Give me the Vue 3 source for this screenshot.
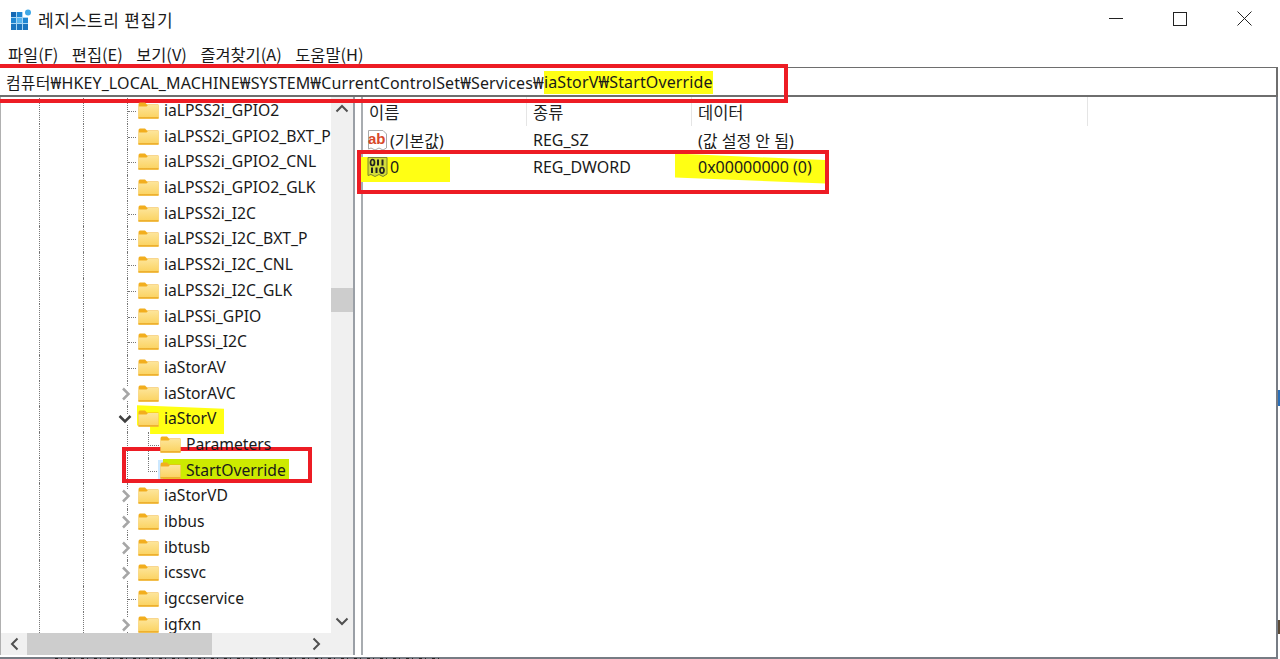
<script setup>
const rows = [
  { name: 'iaLPSS2i_GPIO2', line: 1 },
  { name: 'iaLPSS2i_GPIO2_BXT_P', line: 1 },
  { name: 'iaLPSS2i_GPIO2_CNL', line: 1 },
  { name: 'iaLPSS2i_GPIO2_GLK', line: 1 },
  { name: 'iaLPSS2i_I2C', line: 1 },
  { name: 'iaLPSS2i_I2C_BXT_P', line: 1 },
  { name: 'iaLPSS2i_I2C_CNL', line: 1 },
  { name: 'iaLPSS2i_I2C_GLK', line: 1 },
  { name: 'iaLPSSi_GPIO', line: 1 },
  { name: 'iaLPSSi_I2C', line: 1 },
  { name: 'iaStorAV', line: 1 },
  { name: 'iaStorAVC', exp: 'closed' },
  { name: 'iaStorV', exp: 'open', mark: true },
  { name: 'Parameters', child: true },
  { name: 'StartOverride', child: true, last: true, selected: true, mark: true },
  { name: 'iaStorVD', exp: 'closed' },
  { name: 'ibbus', exp: 'closed' },
  { name: 'ibtusb', exp: 'closed' },
  { name: 'icssvc', exp: 'closed' },
  { name: 'igccservice', line: 1 },
  { name: 'igfxn', exp: 'closed' }
]
const menus = ['파일(F)', '편집(E)', '보기(V)', '즐겨찾기(A)', '도움말(H)']
</script>

<template>
  <div class="window">
    <header class="titlebar">
      <svg class="appicon" width="21" height="21" viewBox="0 0 21 21">
        <rect x="0" y="3" width="17" height="18" fill="#1f86d2" />
        <rect x="6" y="9" width="5" height="5" fill="#58b4ee" />
        <rect x="0" y="3" width="5" height="5" fill="#1468b4" />
        <rect x="0" y="15" width="17" height="6" fill="#1a74be" />
        <path d="M0 8.5H17M0 14.5H17M5.5 3V21M11.5 3V21" stroke="#a8d6f4" stroke-width="1" />
        <rect x="12" y="0" width="9" height="8" fill="#fff" />
        <circle cx="17" cy="3.5" r="3" fill="#3fa8e6" />
      </svg>
      <span class="title">레지스트리 편집기</span>
      <div class="controls">
        <svg width="14" height="14" viewBox="0 0 14 14"><path d="M0 6.5H14" stroke="#222" /></svg>
        <svg width="14" height="14" viewBox="0 0 14 14"><rect x=".5" y=".5" width="13" height="13" fill="none" stroke="#222" /></svg>
        <svg width="15" height="15" viewBox="0 0 15 15"><path d="M.5.5L14.5 14.5M14.5.5L.5 14.5" stroke="#222" /></svg>
      </div>
    </header>

    <nav class="menubar">
      <span v-for="m in menus" :key="m">{{ m }}</span>
    </nav>

    <div class="address">
      <span>컴퓨터₩HKEY_LOCAL_MACHINE₩SYSTEM₩CurrentControlSet₩Services₩</span><span class="hl">iaStorV₩StartOverride</span>
    </div>

    <main class="body">
      <section class="treepane">
        <div class="treearea">
          <ul class="tree">
            <li v-for="r in rows" :key="r.name" class="row" :class="{ child: r.child, last: r.last, selected: r.selected, mark: r.mark }">
              <i class="guide g1"></i>
              <i class="guide g2"></i>
              <i class="guide g3"></i>
              <i v-if="r.line" class="stub"></i>
              <i v-if="r.child" class="elbow"></i>
              <i v-if="r.child" class="cguide"></i>
              <svg v-if="r.exp === 'closed'" class="exp" width="10" height="14" viewBox="0 0 10 14"><path d="M2 1.5L7.5 7L2 12.5" fill="none" stroke="#a6a6a6" stroke-width="2.5" /></svg>
              <svg v-if="r.exp === 'open'" class="exp open" width="14" height="10" viewBox="0 0 14 10"><path d="M1.5 2L7 7.5L12.5 2" fill="none" stroke="#404040" stroke-width="2.5" /></svg>
              <span class="selbox" v-if="r.selected"></span>
              <span class="marker" v-if="r.mark"></span>
              <svg class="folder" width="21" height="17" viewBox="0 0 21 17">
                <defs>
                  <linearGradient id="fg" x1="0" y1="0" x2="0" y2="1">
                    <stop offset="0" stop-color="#fde59a" />
                    <stop offset="1" stop-color="#fbd25e" />
                  </linearGradient>
                </defs>
                <path d="M.5 2.5Q.5 .5 2 .5H7L9 2.5H20.5V16.5H.5Z" fill="#f2ae1e" />
                <path d="M.5 4.5H8.5L10 3H20.5V16.5H.5Z" fill="url(#fg)" />
                <path d="M.5 15.2H20.5V16.5H.5Z" fill="#eaa823" />
              </svg>
              <span class="label">{{ r.name }}</span>
            </li>
          </ul>
          <div class="vscroll">
            <svg width="14" height="9" viewBox="0 0 14 9"><path d="M1.5 7.5L7 2L12.5 7.5" fill="none" stroke="#505050" stroke-width="2" /></svg>
            <div class="vtrack"><div class="vthumb"></div></div>
            <svg width="14" height="9" viewBox="0 0 14 9"><path d="M1.5 1.5L7 7L12.5 1.5" fill="none" stroke="#505050" stroke-width="2" /></svg>
          </div>
        </div>
        <div class="hscroll">
          <svg width="9" height="14" viewBox="0 0 9 14"><path d="M7.5 1.5L2 7L7.5 12.5" fill="none" stroke="#505050" stroke-width="2" /></svg>
          <div class="hthumb"></div>
          <svg width="9" height="14" viewBox="0 0 9 14"><path d="M1.5 1.5L7 7L1.5 12.5" fill="none" stroke="#505050" stroke-width="2" /></svg>
        </div>
      </section>

      <section class="listpane">
        <div class="lrow head">
          <span class="c1">이름</span><span class="c2">종류</span><span class="c3">데이터</span>
        </div>
        <div class="lrow">
          <span class="c1 name">
            <svg class="regicon" width="21" height="22" viewBox="0 0 21 22">
              <path d="M1.5 1.5H16L19.5 5V19L16 21L12 19L8 21L4 19L1.5 20Z" fill="#fff" stroke="#a9a9a9" />
              <text x="1" y="14.5" class="ab">ab</text>
            </svg>
            (기본값)
          </span>
          <span class="c2">REG_SZ</span><span class="c3">(값 설정 안 됨)</span>
        </div>
        <div class="lrow dword">
          <span class="c1 name">
            <span class="mk mk1"></span>
            <svg class="regicon" width="21" height="22" viewBox="0 0 21 22">
              <path d="M1 1.5H20V18L16 20.5L12 18.5L8 20.5L4 18.5L1 19.5Z" fill="#d3dc3a" stroke="#80852c" />
              <ellipse cx="5.5" cy="6.5" rx="2" ry="3" fill="none" stroke="#222" stroke-width="1.7" />
              <path d="M11 3.5V9.5M15.5 3.5V9.5M5 11.5V17M9.5 11.5V17" fill="none" stroke="#222" stroke-width="2" />
              <ellipse cx="15" cy="14.3" rx="2" ry="2.8" fill="none" stroke="#222" stroke-width="1.7" />
            </svg>
            0
          </span>
          <span class="c2">REG_DWORD</span>
          <span class="c3 dv"><span class="mk mk2"></span>0x00000000 (0)</span>
        </div>
      </section>
    </main>

    <div class="redbox r1"></div>
    <div class="redbox r2"></div>
    <div class="redbox r3"></div>
    <div class="behind blue"></div>
    <div class="behind dark"></div>
    <div class="fragments"></div>
  </div>
</template>

<style>
html, body { margin: 0; background: #fff; }
</style>

<style scoped>
.window {
  position: relative;
  width: 1280px;
  height: 659px;
  overflow: hidden;
  background: #fff;
  font-family: "Noto Sans", "Noto Sans CJK KR", sans-serif;
  color: #1a1a1a;
  display: flex;
  flex-direction: column;
  box-sizing: border-box;
  padding-right: 2px;
}
.titlebar {
  height: 40px;
  display: flex;
  align-items: center;
  padding-left: 11px;
  box-sizing: border-box;
  flex: none;
}
.appicon { margin-right: 6px; margin-top: -1px; }
.title { font-size: 17px; letter-spacing: .7px; margin-top: -2px; font-family: "Noto Sans CJK KR", sans-serif; }
.controls {
  margin-left: auto;
  display: flex;
  align-items: center;
  gap: 50px;
  padding-right: 26px;
  margin-top: -3px;
}
.menubar {
  height: 27px;
  flex: none;
  display: flex;
  align-items: center;
  gap: 13.5px;
  padding-left: 8px;
  font-size: 16.4px;
  font-family: "Noto Sans CJK KR", sans-serif;
  box-sizing: border-box;
}
.address {
  height: 30px;
  flex: none;
  box-sizing: border-box;
  border: 1px solid #6e6e6e;
  border-left: 0;
  border-right: 2px solid #6e6e6e;
  border-bottom: 2px solid #6e6e6e;
  padding: 1px 0 0 6px;
  display: flex;
  align-items: center;
  white-space: nowrap;
  font-size: 16px;
  letter-spacing: .13px;
}
.hl { background: #ffff14; height: 23px; line-height: 23px; }
.body {
  flex: none;
  height: 562px;
  display: flex;
  border-bottom: 2px solid #777c84;
  border-right: 2px solid #777c84;
  padding-bottom: 2px;
  box-sizing: border-box;
}
.treepane {
  width: 355px;
  flex: none;
  display: flex;
  flex-direction: column;
  box-sizing: border-box;
  border-left: 1px solid #b0b0b0;
  border-right: 2px solid #9a9fa6;
}
.treearea { flex: 1; display: flex; min-height: 0; }
.tree {
  flex: 1;
  margin: 0;
  padding: 1px 0 0;
  list-style: none;
  overflow: hidden;
  min-width: 0;
}
.row {
  position: relative;
  height: 25.7px;
  font-size: 15.7px;
  white-space: nowrap;
}
.guide { position: absolute; top: 0; bottom: 0; width: 0; border-left: 1px dotted #777; }
.g1 { left: 38px; }
.g2 { left: 82px; }
.g3 { left: 126px; }
.stub { position: absolute; left: 127px; width: 8px; top: 13px; border-top: 1px dotted #777; }
.elbow { position: absolute; left: 147px; top: 0; height: 13px; width: 10px; border-left: 1px dotted #777; border-bottom: 1px dotted #777; }
.cguide { position: absolute; left: 147px; top: 13px; bottom: 0; border-left: 1px dotted #777; }
.last .cguide { display: none; }
.exp { position: absolute; left: 120px; top: 6px; background: #fff; }
.exp.open { left: 117px; top: 8px; }
.folder { position: absolute; left: 137px; top: 4px; }
.child .folder { left: 159px; }
.label { position: absolute; left: 163px; top: 0; line-height: 25px; }
.child .label { left: 185px; }
.selbox { position: absolute; left: 157px; top: 2px; width: 8px; height: 22px; background: #cce8ff; }
.marker {
  position: absolute;
  left: 136px;
  top: -1px;
  height: 29px;
  width: 87px;
  background: #ffff14;
  clip-path: polygon(0 0, 100% 12%, 100% 100%, 15% 100%, 15% 70%, 0 70%);
}
.selected .marker { left: 162px; top: 1px; width: 126px; height: 24px; background: #cdea00; clip-path: none; }
.folder, .label { z-index: 1; }
.vscroll {
  width: 22px;
  flex: none;
  background: #f0f0f0;
  display: flex;
  flex-direction: column;
  align-items: center;
  padding: 7px 0;
  box-sizing: border-box;
}
.vtrack { flex: 1; width: 100%; padding-top: 175px; box-sizing: border-box; }
.vthumb { height: 24px; background: #cdcdcd; }
.hscroll {
  height: 22px;
  flex: none;
  background: #f0f0f0;
  display: flex;
  align-items: center;
  padding: 0 32px 0 9px;
}
.hthumb { width: 185px; height: 22px; background: #cdcdcd; margin-left: 8px; margin-right: auto; }
.listpane {
  flex: 1;
  margin-left: 6px;
  border-left: 2px solid #a8acb0;
  min-width: 0;
}
.lrow {
  display: flex;
  height: 27px;
  align-items: center;
  font-size: 16px;
  white-space: nowrap;
}
.head { height: 29px; color: #222; font-family: "Noto Sans CJK KR", sans-serif; font-size: 16.5px; }
.head span { align-self: stretch; display: flex; align-items: center; border-right: 1px solid #e5e5e5; }
.c1 { width: 164px; padding-left: 6px; box-sizing: border-box; flex: none; }
.c2 { width: 165px; padding-left: 6px; box-sizing: border-box; flex: none; }
.c3 { width: 396px; padding-left: 6px; box-sizing: border-box; flex: none; }
.name { display: flex; align-items: center; position: relative; padding-left: 4px; gap: 2px; z-index: 0; }
.regicon { flex: none; position: relative; z-index: 1; }
.ab { font: 700 15px "Liberation Sans", sans-serif; fill: #d8482a; }
.dv { position: relative; z-index: 0; }
.mk { position: absolute; background: #ffff14; z-index: -1; }
.mk1 { left: -3px; top: 1px; width: 90px; height: 25px; }
.mk2 {
  left: -17px;
  top: -2px;
  width: 150px;
  height: 30px;
  clip-path: polygon(0 0, 100% 22%, 100% 100%, 0 80%);
}
.redbox { position: absolute; border: 4px solid #ed1c24; box-sizing: border-box; pointer-events: none; }
.r1 { left: -4px; top: 64px; width: 792px; height: 39px; }
.r2 { left: 357px; top: 150px; width: 472px; height: 44px; }
.r3 { left: 122px; top: 447px; width: 190px; height: 36px; }
.behind { position: absolute; right: 0; width: 2px; }
.blue { top: 390px; height: 16px; background: #2a6fb8; }
.dark { top: 620px; height: 14px; background: #5b4a36; }
.fragments {
  position: absolute;
  left: 55px;
  bottom: 0;
  width: 385px;
  height: 1px;
  background: repeating-linear-gradient(90deg, #222 0 3px, transparent 3px 6px, #222 6px 7px, transparent 7px 13px);
}
</style>
